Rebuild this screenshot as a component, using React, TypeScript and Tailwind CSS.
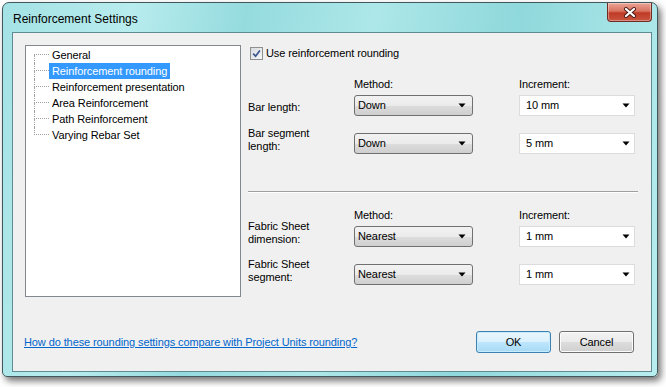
const TREE = [
  'General',
  'Reinforcement rounding',
  'Reinforcement presentation',
  'Area Reinforcement',
  'Path Reinforcement',
  'Varying Rebar Set',
]

function TreeRow({ label, first, last, selected }: { label: string; first: boolean; last: boolean; selected: boolean }) {
  return (
    <div className="flex h-[16px]">
      <div className="w-[8px] shrink-0" />
      <div className="flex w-[15px] shrink-0 flex-col">
        <div className={`h-[8px] border-b border-dotted border-b-[#a0a0a0] ${first ? '' : 'border-l border-l-[#a0a0a0]'}`} />
        <div className={`h-[8px] ${last ? '' : 'border-l border-dotted border-l-[#a0a0a0]'}`} />
      </div>
      <span
        className={`flex h-[16px] items-center px-[3px] leading-[16px] ${
          selected ? 'bg-[#3399ff] text-white' : 'text-black'
        }`}
      >
        {label}
      </span>
    </div>
  )
}

function Arrow() {
  return (
    <svg width="8" height="5" viewBox="0 0 8 5">
      <path d="M0.5 0.5 H7.5 L4 4.5 Z" fill="#000" />
    </svg>
  )
}

function MethodCombo({ value }: { value: string }) {
  return (
    <div className="flex h-[21px] w-[119px] items-center justify-between rounded-[3px] border border-[#707070] bg-[linear-gradient(#f2f2f2_0%,#ebebeb_50%,#dddddd_51%,#cfcfcf_100%)] pl-[3px] pr-[6px]">
      <span>{value}</span>
      <Arrow />
    </div>
  )
}

function IncrementCombo({ value }: { value: string }) {
  return (
    <div className="flex h-[21px] w-[116px] items-center justify-between border border-[#dcdcdc] bg-white pl-[6px] pr-[4px]">
      <span>{value}</span>
      <Arrow />
    </div>
  )
}

function Header() {
  return (
    <div className="grid h-[14px] grid-cols-[106px_165px_116px] leading-[14px]">
      <span />
      <span>Method:</span>
      <span>Increment:</span>
    </div>
  )
}

function Row({ lines, method, inc }: { lines: string[]; method: string; inc: string }) {
  return (
    <div className="grid h-[21px] grid-cols-[106px_165px_116px] items-start">
      <div className={`leading-[13px] ${lines.length > 1 ? '-mt-[6px]' : 'mt-[6px]'}`}>
        {lines.map((l) => (
          <div key={l}>{l}</div>
        ))}
      </div>
      <MethodCombo value={method} />
      <IncrementCombo value={inc} />
    </div>
  )
}

function Button({ label, primary }: { label: string; primary?: boolean }) {
  return (
    <div
      className={`flex h-[22px] w-[75px] items-center justify-center rounded-[3px] border ${
        primary
          ? 'border-[#3c7fb1] bg-[linear-gradient(#eaf6fd_0%,#d9f0fc_50%,#bee6fd_51%,#a7d9f5_100%)] shadow-[inset_0_0_0_1px_#c8ecff]'
          : 'border-[#707070] bg-[linear-gradient(#f2f2f2_0%,#ebebeb_50%,#dddddd_51%,#cfcfcf_100%)] shadow-[inset_0_0_0_1px_#fcfcfc]'
      }`}
    >
      {label}
    </div>
  )
}

export default function App() {
  return (
    <div className="h-[387px] w-[666px] overflow-hidden bg-white font-['Liberation_Sans',Arial,sans-serif] text-[11px] tracking-[-0.1px] text-black">
      <div className="ml-[2px] mt-[2px] flex h-[375px] w-[656px] flex-col rounded-b-[5px] rounded-t-[7px] border border-[#41585c] bg-[linear-gradient(100deg,#a3e2e5_0%,#b8ecee_18%,#95dbde_34%,#ade7e9_52%,#8fd8db_72%,#b9eef0_100%)] shadow-[3px_4px_7px_rgba(0,0,0,0.55)]">
        {/* title bar */}
        <div className="flex h-[29px] shrink-0 items-start pl-[10px]">
          <span className="mt-[9px] text-[12px] leading-[14px] tracking-normal text-black">Reinforcement Settings</span>
          <div className="ml-auto mr-[5px] flex h-[19px] w-[45px] items-center justify-center rounded-b-[4px] border border-t-0 border-[#6e2b24] bg-[linear-gradient(#eaa495_0%,#d87461_45%,#bf3a26_55%,#c9553f_100%)] shadow-[inset_0_0_0_1px_rgba(255,255,255,0.35)]">
            <svg width="14" height="11" viewBox="0 0 14 11">
              <path d="M3 2 L11 9 M11 2 L3 9" stroke="#4a1a14" strokeWidth="4" strokeLinecap="round" />
              <path d="M3 2 L11 9 M11 2 L3 9" stroke="#fff" strokeWidth="2.2" strokeLinecap="round" />
            </svg>
          </div>
        </div>

        {/* client area */}
        <div className="mb-[4px] ml-[9px] mr-[5px] flex flex-1 flex-col border border-[#5f8c92] bg-[#f0f0f0]">
          <div className="flex pl-[12px] pt-[12px]">
            <div className="h-[252px] w-[216px] shrink-0 border border-[#828790] bg-white pt-[1px]">
              {TREE.map((t, i) => (
                <TreeRow key={t} label={t} first={i === 0} last={i === TREE.length - 1} selected={i === 1} />
              ))}
            </div>

            <div className="ml-[7px] flex w-[390px] flex-col">
              <div className="flex h-[16px] items-center">
                <span className="ml-[2px] flex h-[13px] w-[13px] items-center justify-center border border-[#8f8f8f] bg-[linear-gradient(135deg,#d8dbe0,#f7f7f7)]">
                  <svg width="9" height="9" viewBox="0 0 9 9">
                    <path d="M1.2 4.6 L3.6 7.2 L7.9 1.4" stroke="#3b5591" strokeWidth="1.7" fill="none" />
                  </svg>
                </span>
                <span className="ml-[3px]">Use reinforcement rounding</span>
              </div>

              <div className="mt-[16px]">
                <Header />
              </div>
              <div className="mt-[4px]">
                <Row lines={['Bar length:']} method="Down" inc="10 mm" />
              </div>
              <div className="mt-[17px]">
                <Row lines={['Bar segment', 'length:']} method="Down" inc="5 mm" />
              </div>

              <div className="mt-[37px] h-[2px] border-b border-t border-b-white border-t-[#a0a0a0]" />

              <div className="mt-[15px]">
                <Header />
              </div>
              <div className="mt-[4px]">
                <Row lines={['Fabric Sheet', 'dimension:']} method="Nearest" inc="1 mm" />
              </div>
              <div className="mt-[17px]">
                <Row lines={['Fabric Sheet', 'segment:']} method="Nearest" inc="1 mm" />
              </div>
            </div>
          </div>

          <div className="mt-[34px] flex h-[22px] items-center pl-[11px] pr-[17px]">
            <span className="text-[#0066cc] underline">How do these rounding settings compare with Project Units rounding?</span>
            <div className="ml-auto flex gap-[8px]">
              <Button label="OK" primary />
              <Button label="Cancel" />
            </div>
          </div>
        </div>
      </div>
    </div>
  )
}
